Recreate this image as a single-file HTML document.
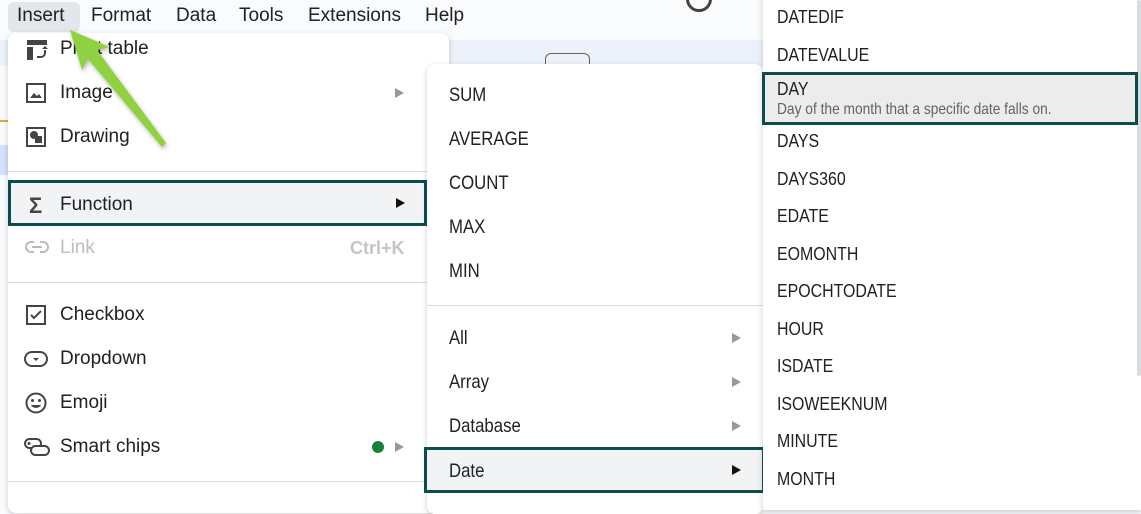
<!DOCTYPE html>
<html><head><meta charset="utf-8"><style>
*{box-sizing:border-box;margin:0;padding:0}
body{width:1141px;height:500px;overflow:hidden;background:#f9fbfd;font-family:"Liberation Sans",sans-serif;color:#202124;position:relative}
.a{position:absolute}
.menubar span{position:absolute;top:5px;font-size:19px;color:#202124}
.m{position:absolute;background:#fff;border-radius:8px;box-shadow:0 2px 6px rgba(60,64,67,.25)}
.it{position:absolute;left:0;right:0;height:44px;font-size:19px;line-height:44px}
.it .t{position:absolute;left:52px}
.div{position:absolute;left:0;right:0;height:1px;background:#dadce0}
.arr{position:absolute;width:0;height:0;border-top:5px solid transparent;border-bottom:5px solid transparent;border-left:9px solid #757575}
.c{font-size:19.5px;transform:scaleX(.86);transform-origin:left center;display:inline-block;white-space:nowrap}
.sel{position:absolute;border:3px solid #0b4c4f;background:#f1f3f4}
.ico{position:absolute;left:26px}
</style></head><body>
<div class="a" style="left:0;top:40px;width:1141px;height:26px;background:#edf2fa"></div>
<div class="a" style="left:545px;top:53px;width:45px;height:26px;border:1.5px solid #5f6368;border-radius:6px"></div>
<div class="a" style="left:0;top:120px;width:8px;height:2px;background:#e8a33a"></div>
<div class="a" style="left:0;top:145px;width:8px;height:30px;background:#d3e3fd"></div>
<div class="menubar">
<div class="a" style="left:8px;top:2px;width:72px;height:30px;background:#e3e6ea;border-radius:6px"></div>
<span style="left:17px">Insert</span><span style="left:91px">Format</span><span style="left:176px">Data</span><span style="left:239px">Tools</span><span style="left:308px">Extensions</span><span style="left:425px">Help</span>
</div>
<div class="a" style="left:686px;top:-14px;width:26px;height:26px;border:3px solid #444;border-radius:50%"></div>

<div class="m" style="left:8px;top:33px;width:441px;height:480px">
 <div class="it" style="top:-6px"><svg class="ico" style="left:18px;top:12px" width="22" height="22" viewBox="0 0 22 22"><rect x="1" y="1" width="20" height="5" fill="#444"/><rect x="1" y="8" width="6" height="13" fill="#444"/><path d="M11 18h4a4 4 0 0 0 4-4v-3" stroke="#444" stroke-width="2" fill="none"/><path d="M16 10l3-3 3 3" fill="#444"/></svg><span class="t">Pivot table</span></div>
 <div class="it" style="top:38px"><svg class="ico" style="left:18px;top:12px" width="20" height="20" viewBox="0 0 20 20"><rect x="1" y="1" width="18" height="18" fill="none" stroke="#444" stroke-width="2"/><path d="M4 15l4-5 3 3 2-2 3 4z" fill="#444"/></svg><span class="t">Image</span><div class="arr" style="left:387px;top:17px;border-left-color:#999"></div></div>
 <div class="it" style="top:82px"><svg class="ico" style="left:18px;top:12px" width="20" height="20" viewBox="0 0 20 20"><rect x="1" y="1" width="18" height="18" fill="none" stroke="#444" stroke-width="2"/><circle cx="8" cy="8" r="4" fill="#444"/><rect x="9" y="9" width="7" height="7" fill="#444"/></svg><span class="t">Drawing</span></div>
 <div class="div" style="top:138px"></div>
 <div class="it" style="top:193px;color:#bdbdbd"><svg class="ico" style="left:17px;top:14px" width="24" height="14" viewBox="0 0 24 14"><path d="M9 2H6a5 5 0 0 0 0 10h3M15 2h3a5 5 0 0 1 0 10h-3M7 7h10" stroke="#bbb" stroke-width="2" fill="none"/></svg><span class="t">Link</span><span style="position:absolute;left:342px;font-weight:bold;font-size:18px;color:#c4c4c4">Ctrl+K</span></div>
 <div class="div" style="top:249px"></div>
 <div class="it" style="top:260px"><svg class="ico" style="left:18px;top:12px" width="20" height="20" viewBox="0 0 20 20"><rect x="1" y="1" width="18" height="18" fill="none" stroke="#444" stroke-width="2"/><path d="M5 10l3 3 7-7" stroke="#444" stroke-width="2" fill="none"/></svg><span class="t">Checkbox</span></div>
 <div class="it" style="top:304px"><svg class="ico" style="left:16px;top:13px" width="24" height="18" viewBox="0 0 24 18"><rect x="1" y="2" width="22" height="14" rx="7" fill="none" stroke="#444" stroke-width="2"/><path d="M9 8h6l-3 3z" fill="#444"/></svg><span class="t">Dropdown</span></div>
 <div class="it" style="top:348px"><svg class="ico" style="left:17px;top:11px" width="22" height="22" viewBox="0 0 22 22"><circle cx="11" cy="11" r="9.5" fill="none" stroke="#444" stroke-width="2"/><circle cx="7.5" cy="8.5" r="1.5" fill="#444"/><circle cx="14.5" cy="8.5" r="1.5" fill="#444"/><path d="M6 13a5.5 5 0 0 0 10 0z" fill="#444"/></svg><span class="t">Emoji</span></div>
 <div class="it" style="top:392px"><svg class="ico" style="left:16px;top:12px" width="26" height="20" viewBox="0 0 26 20"><rect x="1" y="2" width="16" height="9" rx="4.5" fill="none" stroke="#444" stroke-width="2"/><rect x="7" y="9" width="18" height="9" rx="4.5" fill="#fff" stroke="#444" stroke-width="2"/><circle cx="5" cy="6.5" r="1.5" fill="#444"/></svg><span class="t">Smart chips</span><div class="a" style="left:364px;top:16px;width:12px;height:12px;border-radius:50%;background:#188038"></div><div class="arr" style="left:387px;top:17px;border-left-color:#999"></div></div>
 <div class="div" style="top:448px"></div>
</div>
<div class="sel" style="left:8px;top:180px;width:419px;height:46px"><span style="position:absolute;left:18px;top:10px;font-size:22px;font-weight:bold;color:#444">Σ</span><span style="position:absolute;left:49px;top:11px;font-size:19px">Function</span><div class="arr" style="left:385px;top:15px;border-left-color:#111"></div></div>

<div class="m" style="left:427px;top:64px;width:336px;height:450px">
 <div class="it" style="top:9px;padding-left:22px"><span class="c">SUM</span></div>
 <div class="it" style="top:53px;padding-left:22px"><span class="c">AVERAGE</span></div>
 <div class="it" style="top:97px;padding-left:22px"><span class="c">COUNT</span></div>
 <div class="it" style="top:141px;padding-left:22px"><span class="c">MAX</span></div>
 <div class="it" style="top:185px;padding-left:22px"><span class="c">MIN</span></div>
 <div class="div" style="top:241px"></div>
 <div class="it" style="top:252px;padding-left:22px"><span class="c">All</span><div class="arr" style="left:305px;top:17px;border-left-color:#999"></div></div>
 <div class="it" style="top:296px;padding-left:22px"><span class="c">Array</span><div class="arr" style="left:305px;top:17px;border-left-color:#999"></div></div>
 <div class="it" style="top:340px;padding-left:22px"><span class="c">Database</span><div class="arr" style="left:305px;top:17px;border-left-color:#999"></div></div>
</div>
<div class="sel" style="left:424px;top:447px;width:341px;height:46px"><span class="c" style="position:absolute;left:22px;top:10px">Date</span><div class="arr" style="left:305px;top:15px;border-left-color:#111"></div></div>

<div class="m" style="left:763px;top:-10px;width:378px;height:520px;border-radius:0">
 <div class="a" style="right:0;top:10px;width:4px;height:376px;background:#dadce0;border-radius:2px"></div>
</div>
<div class="a" style="left:777px;top:0;width:360px">
 <div class="a" style="top:6px"><span class="c" style="font-size:18.5px">DATEDIF</span></div>
 <div class="a" style="top:44px"><span class="c" style="font-size:18.5px">DATEVALUE</span></div>
 <div class="a" style="top:130px"><span class="c" style="font-size:18.5px">DAYS</span></div>
 <div class="a" style="top:168px"><span class="c" style="font-size:18.5px">DAYS360</span></div>
 <div class="a" style="top:205px"><span class="c" style="font-size:18.5px">EDATE</span></div>
 <div class="a" style="top:243px"><span class="c" style="font-size:18.5px">EOMONTH</span></div>
 <div class="a" style="top:280px"><span class="c" style="font-size:18.5px">EPOCHTODATE</span></div>
 <div class="a" style="top:318px"><span class="c" style="font-size:18.5px">HOUR</span></div>
 <div class="a" style="top:355px"><span class="c" style="font-size:18.5px">ISDATE</span></div>
 <div class="a" style="top:393px"><span class="c" style="font-size:18.5px">ISOWEEKNUM</span></div>
 <div class="a" style="top:430px"><span class="c" style="font-size:18.5px">MINUTE</span></div>
 <div class="a" style="top:468px"><span class="c" style="font-size:18.5px">MONTH</span></div>
</div>
<div class="sel" style="left:762px;top:72px;width:376px;height:53px;background:#ececec">
 <span class="c" style="position:absolute;left:12px;top:3px;font-size:18.5px">DAY</span>
 <span class="c" style="position:absolute;left:12px;top:26px;font-size:16px;color:#5f6368">Day of the month that a specific date falls on.</span>
</div>

<svg class="a" style="left:0;top:0" width="200" height="170" viewBox="0 0 200 170">
<defs><filter id="s"><feDropShadow dx="1" dy="2" stdDeviation="2" flood-opacity=".3"/></filter></defs>
<polygon filter="url(#s)" fill="#8fd13f" points="70,30 110,47 97,50 166,143 162,147 88,59 82,70"/>
</svg>
</body></html>
